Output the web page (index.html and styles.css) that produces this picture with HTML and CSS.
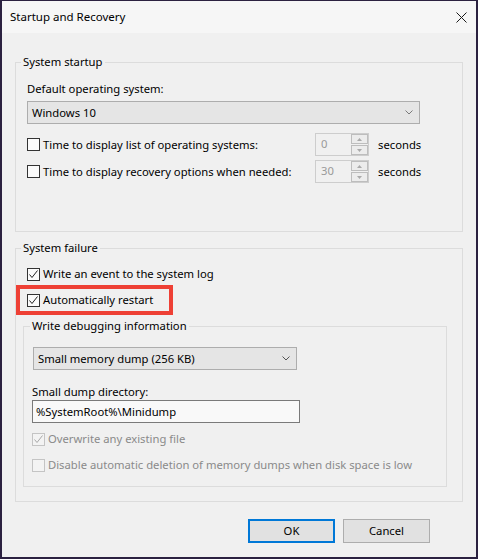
FILE: index.html
```html
<!DOCTYPE html>
<html>
<head>
<meta charset="utf-8">
<title>Startup and Recovery</title>
<link rel="stylesheet" href="styles.css">
</head>
<body>
<div class="window">
  <div class="titlebar">
    <span class="title">Startup and Recovery</span>
    <span class="close"><svg width="11" height="11" viewBox="0 0 11 11"><path d="M0.5 0.5L10.5 10.5M10.5 0.5L0.5 10.5" stroke="#1a1a1a" stroke-width="1" fill="none"/></svg></span>
  </div>
  <div class="content">
    <fieldset class="group g-startup">
      <legend>System startup</legend>
      <div class="startup-body">
        <div class="label">Default operating system:</div>
        <div class="select os-select">
          <span>Windows 10</span>
          <svg class="chev" width="8" height="5" viewBox="0 0 8 5"><path d="M0.5 0.5L4 4L7.5 0.5" stroke="#7a7a7a" fill="none"/></svg>
        </div>
        <div class="timerows">
          <div class="timerow">
            <div class="check"><span class="box"></span><span>Time to display list of operating systems:</span></div>
            <div class="spin"><span class="val">0</span><span class="spinbtns"><span class="sb"><svg width="5" height="3" viewBox="0 0 5 3"><path d="M0 3L2.5 0L5 3Z" fill="#a9a9a9"/></svg></span><span class="sb"><svg width="5" height="3" viewBox="0 0 5 3"><path d="M0 0L2.5 3L5 0Z" fill="#a9a9a9"/></svg></span></span></div>
            <span class="unit">seconds</span>
          </div>
          <div class="timerow">
            <div class="check"><span class="box"></span><span>Time to display recovery options when needed:</span></div>
            <div class="spin"><span class="val">30</span><span class="spinbtns"><span class="sb"><svg width="5" height="3" viewBox="0 0 5 3"><path d="M0 3L2.5 0L5 3Z" fill="#a9a9a9"/></svg></span><span class="sb"><svg width="5" height="3" viewBox="0 0 5 3"><path d="M0 0L2.5 3L5 0Z" fill="#a9a9a9"/></svg></span></span></div>
            <span class="unit">seconds</span>
          </div>
        </div>
      </div>
    </fieldset>

    <fieldset class="group g-failure">
      <legend>System failure</legend>
      <div class="failure-body">
        <div class="check fail-row"><span class="box"><svg width="11" height="11" viewBox="0 0 11 11"><path d="M1.5 5.5L4 8.5L9.5 1.5" stroke="#222" stroke-width="1" fill="none"/></svg></span><span>Write an event to the system log</span></div>
        <div class="check fail-row restart highlighted"><span class="box"><svg width="11" height="11" viewBox="0 0 11 11"><path d="M1.5 5.5L4 8.5L9.5 1.5" stroke="#222" stroke-width="1" fill="none"/></svg></span><span>Automatically restart</span></div>

        <fieldset class="group g-debug">
          <legend>Write debugging information</legend>
          <div class="debug-body">
            <div class="select dump-select">
              <span>Small memory dump (256 KB)</span>
              <svg class="chev" width="8" height="5" viewBox="0 0 8 5"><path d="M0.5 0.5L4 4L7.5 0.5" stroke="#555" fill="none"/></svg>
            </div>
            <div class="label dir-label">Small dump directory:</div>
            <div class="textbox">%SystemRoot%\Minidump</div>
            <div class="check disabled overwrite"><span class="box"><svg width="11" height="11" viewBox="0 0 11 11"><path d="M1.5 5.5L4 8.5L9.5 1.5" stroke="#a8a8a8" stroke-width="1" fill="none"/></svg></span><span>Overwrite any existing file</span></div>
            <div class="check disabled disable-row"><span class="box"></span><span>Disable automatic deletion of memory dumps when disk space is low</span></div>
          </div>
        </fieldset>
      </div>
    </fieldset>

    <div class="buttons">
      <button class="btn default">OK</button>
      <button class="btn">Cancel</button>
    </div>
  </div>
</div>
</body>
</html>
```
FILE: styles.css
```css
*, *::before, *::after { box-sizing: border-box; }
html, body { margin: 0; padding: 0; }
body {
  width: 478px;
  height: 559px;
  overflow: hidden;
  font-family: "Noto Sans", "DejaVu Sans", sans-serif;
  font-size: 11.25px;
  line-height: 16px;
  color: #000;
  background: #f0f0f0;
}
.window {
  height: 559px;
  border: 2px solid #2b2140;
  border-top-width: 1px;
  background: #f0f0f0;
  display: flex;
  flex-direction: column;
}
.titlebar {
  height: 32px;
  flex: none;
  background: #f6f6f6;
  display: flex;
  align-items: center;
  justify-content: space-between;
  padding: 0 9px 0 8px;
}
.title { font-size: 11.5px; }
.close { display: flex; }
.close svg { display: block; }

.content {
  flex: 1;
  display: flex;
  flex-direction: column;
  padding: 21px 13px 0 13px;
}
fieldset.group {
  margin: 0;
  padding: 0;
  border: 1px solid #dcdcdc;
  min-width: 0;
}
fieldset.group > legend {
  padding: 0 2px;
  margin-left: 5px;
  line-height: 16px;
}
.startup-body { padding: 11px 11px 48px 11px; }
.label { height: 16px; }
.select {
  height: 23px;
  border: 1px solid #adadad;
  background: #e5e5e5;
  display: flex;
  align-items: center;
  justify-content: space-between;
  padding: 0 6px 0 4px;
}
.select .chev { display: block; }
.os-select { margin-top: 4px; width: 393px; }
.timerows {
  margin-top: 9px;
  display: flex;
  flex-direction: column;
  gap: 4px;
}
.timerow {
  display: grid;
  grid-template-columns: 279px 54px auto;
  column-gap: 9px;
  align-items: center;
  height: 23px;
}
.check {
  display: flex;
  align-items: center;
  height: 16px;
  white-space: nowrap;
}
.check .box {
  width: 13px;
  height: 13px;
  flex: none;
  border: 1px solid #333;
  background: #fbfbfb;
  margin-right: 3px;
  display: flex;
  align-items: center;
  justify-content: center;
}
.check .box svg { display: block; }
.check.disabled { color: #8a8a8a; }
.check.disabled .box { border-color: #c4c4c4; background: #f3f3f3; }

.spin {
  height: 23px;
  border: 1px solid #cdcdcd;
  background: #f0f0f0;
  display: flex;
  justify-content: space-between;
  color: #9a9a9a;
}
.spin .val { padding: 2px 0 0 5px; }
.spinbtns {
  width: 17px;
  display: flex;
  flex-direction: column;
  gap: 1px;
}
.sb {
  flex: 1;
  border: 1px solid #bdbdbd;
  background: #ececec;
  display: flex;
  align-items: center;
  justify-content: center;
}
.sb svg { display: block; }

fieldset.g-failure { margin-top: 8px; }
.failure-body { padding: 10px 15px 14px 7px; }
.fail-row { margin-left: 4px; }
.restart { margin-top: 10px; }
.highlighted { position: relative; width: max-content; }
.highlighted::after {
  content: "";
  position: absolute;
  left: -11px;
  top: -7px;
  width: 157px;
  height: 30px;
  border: 4px solid #ee4035;
  pointer-events: none;
}
fieldset.g-debug { margin-top: 10px; }
fieldset.g-debug > legend { margin-left: 6px; }
.debug-body { padding: 13px 8px 13px 8px; }
.dump-select { width: 264px; margin-left: 1px; }
.dir-label { margin-top: 14px; }
.textbox {
  width: 268px;
  height: 23px;
  border: 1px solid #7a7a7a;
  background: #f9f9f9;
  padding: 3px 0 0 3px;
  line-height: 16px;
}
.overwrite { margin-top: 8px; }
.disable-row { margin-top: 10px; }

.buttons {
  margin-top: 17px;
  display: flex;
  justify-content: flex-end;
  gap: 8px;
  padding-right: 33px;
}
.btn {
  width: 87px;
  height: 24px;
  font: inherit;
  color: #000;
  background: #e1e1e1;
  border: 1px solid #adadad;
  padding: 0;
  margin: 0;
}
.btn.default { border: 2px solid #0078d7; }
```
